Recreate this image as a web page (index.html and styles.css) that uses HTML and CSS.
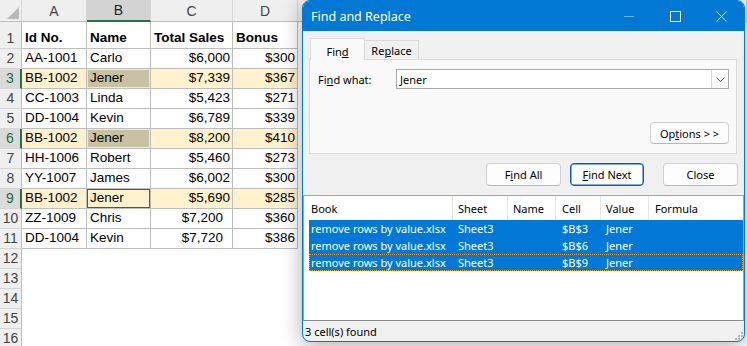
FILE: index.html
```html
<!DOCTYPE html>
<html>
<head>
<meta charset="utf-8">
<link rel="stylesheet" href="styles.css">
</head>
<body>
<div class="sheet">
  <div class="c hd corner"><svg class="tri" width="12" height="12" viewBox="0 0 12 12"><polygon points="12,0 12,12 0,12" fill="#b9b9b9"/></svg></div>
  <div class="c hd">A</div><div class="c hd sel">B</div><div class="c hd">C</div><div class="c hd">D</div><div class="c hd"></div>

  <div class="c rh">1</div><div class="c d b">Id No.</div><div class="c d b">Name</div><div class="c d b">Total Sales</div><div class="c d b">Bonus</div><div class="c"></div>
  <div class="c rh">2</div><div class="c d">AA-1001</div><div class="c d">Carlo</div><div class="c d r">$6,000</div><div class="c d r">$300</div><div class="c"></div>
  <div class="c rh sel">3</div><div class="c d hl">BB-1002</div><div class="c d found">Jener</div><div class="c d r hl">$7,339</div><div class="c d r hl">$367</div><div class="c"></div>
  <div class="c rh">4</div><div class="c d">CC-1003</div><div class="c d">Linda</div><div class="c d r">$5,423</div><div class="c d r">$271</div><div class="c"></div>
  <div class="c rh">5</div><div class="c d">DD-1004</div><div class="c d">Kevin</div><div class="c d r">$6,789</div><div class="c d r">$339</div><div class="c"></div>
  <div class="c rh sel">6</div><div class="c d hl">BB-1002</div><div class="c d found">Jener</div><div class="c d r hl">$8,200</div><div class="c d r hl">$410</div><div class="c"></div>
  <div class="c rh">7</div><div class="c d">HH-1006</div><div class="c d">Robert</div><div class="c d r">$5,460</div><div class="c d r">$273</div><div class="c"></div>
  <div class="c rh">8</div><div class="c d">YY-1007</div><div class="c d">James</div><div class="c d r">$6,002</div><div class="c d r">$300</div><div class="c"></div>
  <div class="c rh sel">9</div><div class="c d hl">BB-1002</div><div class="c d hl act">Jener</div><div class="c d r hl">$5,690</div><div class="c d r hl">$285</div><div class="c"></div>
  <div class="c rh">10</div><div class="c d">ZZ-1009</div><div class="c d">Chris</div><div class="c d r sp">$7,200</div><div class="c d r">$360</div><div class="c"></div>
  <div class="c rh">11</div><div class="c d">DD-1004</div><div class="c d">Kevin</div><div class="c d r sp">$7,720</div><div class="c d r">$386</div><div class="c"></div>
  <div class="c rh">12</div><div class="c"></div><div class="c"></div><div class="c"></div><div class="c"></div><div class="c"></div>
  <div class="c rh">13</div><div class="c"></div><div class="c"></div><div class="c"></div><div class="c"></div><div class="c"></div>
  <div class="c rh">14</div><div class="c"></div><div class="c"></div><div class="c"></div><div class="c"></div><div class="c"></div>
  <div class="c rh">15</div><div class="c"></div><div class="c"></div><div class="c"></div><div class="c"></div><div class="c"></div>
  <div class="c rh">16</div><div class="c"></div><div class="c"></div><div class="c"></div><div class="c"></div><div class="c"></div>
</div>

<div class="dlg">
  <div class="titlebar">
    <span class="ttl">Find and Replace</span>
    <div class="tbtns">
      <span class="tb"><svg width="10" height="10" viewBox="0 0 10 10"><line x1="0" y1="5.5" x2="10" y2="5.5" stroke="#6fb0e6" stroke-width="1"/></svg></span>
      <span class="tb"><svg width="11" height="11" viewBox="0 0 11 11"><rect x="0.5" y="0.5" width="10" height="10" fill="none" stroke="#fff" stroke-width="1"/></svg></span>
      <span class="tb"><svg width="11" height="11" viewBox="0 0 11 11"><path d="M0.5 0.5 L10.5 10.5 M10.5 0.5 L0.5 10.5" stroke="#fff" stroke-width="1"/></svg></span>
    </div>
  </div>
  <div class="tabs">
    <div class="tab on">Fin<u>d</u></div>
    <div class="tab">Re<u>p</u>lace</div>
  </div>
  <div class="panel">
    <div class="findrow">
      <span class="lbl">Fi<u>n</u>d what:</span>
      <div class="combo"><span class="val">Jener</span><span class="dd"><svg width="9" height="5" viewBox="0 0 9 5"><path d="M0.5 0.5 L4.5 4.5 L8.5 0.5" fill="none" stroke="#606060" stroke-width="1"/></svg></span></div>
    </div>
    <div class="optrow"><span class="btn opt">Op<u>t</u>ions &gt; &gt;</span></div>
  </div>
  <div class="btnrow">
    <span class="btn fa">F<u>i</u>nd All</span>
    <span class="btn fn"><u>F</u>ind Next</span>
    <span class="btn cl">Close</span>
  </div>
  <div class="results">
    <div class="rhead">
      <span class="col c1">Book</span><span class="col c2">Sheet</span><span class="col c3">Name</span><span class="col c4">Cell</span><span class="col c5">Value</span><span class="col c6">Formula</span>
    </div>
    <div class="rrow"><span class="col c1">remove rows by value.xlsx</span><span class="col c2">Sheet3</span><span class="col c3"></span><span class="col c4">$B$3</span><span class="col c5">Jener</span><span class="col c6"></span></div>
    <div class="rrow"><span class="col c1">remove rows by value.xlsx</span><span class="col c2">Sheet3</span><span class="col c3"></span><span class="col c4">$B$6</span><span class="col c5">Jener</span><span class="col c6"></span></div>
    <div class="rrow focus"><span class="col c1">remove rows by value.xlsx</span><span class="col c2">Sheet3</span><span class="col c3"></span><span class="col c4">$B$9</span><span class="col c5">Jener</span><span class="col c6"></span></div>
  </div>
  <div class="status">3 cell(s) found
    <svg class="grip" width="8" height="8" viewBox="0 0 8 8" fill="#b5b5b5"><rect x="6" y="0" width="2" height="2"/><rect x="3" y="3" width="2" height="2"/><rect x="6" y="3" width="2" height="2"/><rect x="0" y="6" width="2" height="2"/><rect x="3" y="6" width="2" height="2"/><rect x="6" y="6" width="2" height="2"/></svg>
  </div>
</div>
</body>
</html>
```

FILE: styles.css
```css
* { box-sizing: border-box; margin: 0; padding: 0; }
html, body { width: 747px; height: 346px; overflow: hidden; background: #fff; }
body { position: relative; font-family: "Liberation Sans", Arial, sans-serif; }

.sheet {
  display: grid;
  grid-template-columns: 22px 65px 64px 82px 65px 1fr;
  grid-template-rows: 22px 27px repeat(15, 20px);
  font-size: 13.5px;
  color: #000;
}
.c {
  display: flex;
  align-items: flex-end;
  padding: 0 3px 2px 3px;
  white-space: nowrap;
  overflow: hidden;
  line-height: 16px;
}
.hd {
  background: #efefef;
  border-right: 1px solid #d5d5d5;
  border-bottom: 1px solid #bdbdbd;
  justify-content: center;
  align-items: center;
  color: #444;
  padding: 0;
  font-size: 14px;
}
.hd.sel { background: #d3d3d3; border-bottom: 2px solid #217346; color: #222; }
.corner { position: relative; }
.tri { position: absolute; right: 2px; bottom: 2px; }
.rh {
  background: #efefef;
  border-right: 1px solid #bdbdbd;
  border-bottom: 1px solid #d5d5d5;
  justify-content: center;
  color: #444;
  padding: 0 0 2px 0;
  font-size: 14px;
}
.rh.sel { background: #dadada; border-right: 2px solid #217346; color: #1d6a40; }
.d { border-right: 1px solid #bdbdbd; border-bottom: 1px solid #bdbdbd; }
.b { font-weight: 700; }
.r { justify-content: flex-end; padding-right: 2px; }
.sp { padding-right: 9px; }
.hl { background: #fff2cc; }
.found { background: #c9c2a2; box-shadow: inset 0 0 0 1px #eeeadb; }
.act { box-shadow: inset 0 0 0 1px #217346; }

.dlg {
  position: absolute;
  left: 302px;
  top: 0;
  width: 443px;
  height: 342px;
  border: 1px solid #0078d4;
  border-radius: 8px;
  background: #f0f0f0;
  box-shadow: 0 4px 22px rgba(0, 0, 0, 0.32);
  font-family: "Noto Sans", "Open Sans", sans-serif;
  font-size: 11px;
  color: #000;
  display: flex;
  flex-direction: column;
  overflow: hidden;
}
.titlebar {
  flex: none;
  height: 30px;
  background: #0078d4;
  color: #fff;
  display: flex;
  align-items: center;
  padding-left: 8px;
  font-size: 12.5px;
}
.ttl { flex: 1; }
.tbtns { display: flex; height: 100%; }
.tb { width: 46px; display: flex; align-items: center; justify-content: center; }

.tabs {
  flex: none;
  display: flex;
  align-items: flex-end;
  height: 21px;
  margin: 7px 0 0 7px;
  position: relative;
  z-index: 1;
}
.tab {
  width: 55px;
  height: 19px;
  border: 1px solid #d9d9d9;
  border-bottom: none;
  background: #f0f0f0;
  display: flex;
  align-items: center;
  justify-content: center;
  padding-top: 1px;
}
.tab.on { height: 22px; margin-bottom: -1px; background: #f9f9f9; padding-top: 3px; }
.tab + .tab { margin-left: -1px; }

.panel {
  flex: none;
  margin-left: 6px;
  width: 428px;
  height: 95px;
  background: #f9f9f9;
  border: 1px solid #dadada;
  padding: 9px 7px 0 8px;
}
.findrow { display: flex; align-items: center; height: 20px; }
.lbl { width: 78px; }
.combo {
  flex: 1;
  height: 20px;
  border: 1px solid #a8a8a8;
  background: #fff;
  display: flex;
  align-items: center;
  padding-left: 3px;
}
.val { flex: 1; }
.dd {
  width: 17px;
  height: 18px;
  border-left: 1px solid #d4d4d4;
  display: flex;
  align-items: center;
  justify-content: center;
  background: #fff;
}
.optrow { display: flex; justify-content: flex-end; margin-top: 33px; }
.btn {
  display: flex;
  align-items: center;
  justify-content: center;
  height: 23px;
  background: #fdfdfd;
  border: 1px solid #d0d0d0;
  border-bottom-color: #b8b8b8;
  border-radius: 4px;
}
.opt { width: 79px; height: 22px; }
.btnrow { flex: none; display: flex; justify-content: flex-end; padding-right: 6px; margin-top: 9px; }
.fa { width: 75px; }
.fn { width: 74px; margin-left: 9px; border: 1px solid #005fb8; box-shadow: inset 0 0 0 0.5px #005fb8; }
.cl { width: 75px; margin-left: 19px; }

.results {
  flex: none;
  height: 126px;
  margin-top: 9px;
  border: 1px solid #97a7ba;
  border-bottom-color: #8c8c8c;
  background: #fff;
  padding-left: 5px;
}
.rhead { display: flex; height: 24px; align-items: stretch; }
.rhead .col { border-right: 1px solid #e6e6e6; display: flex; align-items: center; }
.rrow { display: flex; height: 17px; align-items: center; background: #0078d7; color: #fff; }
.rrow.focus { outline: 1px dotted #f59a23; outline-offset: -1px; }
.col { padding-left: 5px; white-space: nowrap; overflow: hidden; height: 100%; display: flex; align-items: center; }
.c1 { width: 144px; padding-left: 2px; }
.c2 { width: 55px; }
.c3 { width: 48px; }
.c4 { width: 45px; padding-left: 6px; }
.c5 { width: 48px; }
.c6 { flex: 1; padding-left: 6px; }
.rhead .c6 { border-right: none; }

.status {
  flex: none;
  height: 20px;
  display: flex;
  align-items: center;
  padding-left: 2px;
  position: relative;
}
.grip { position: absolute; right: 1px; bottom: 1px; }
```
